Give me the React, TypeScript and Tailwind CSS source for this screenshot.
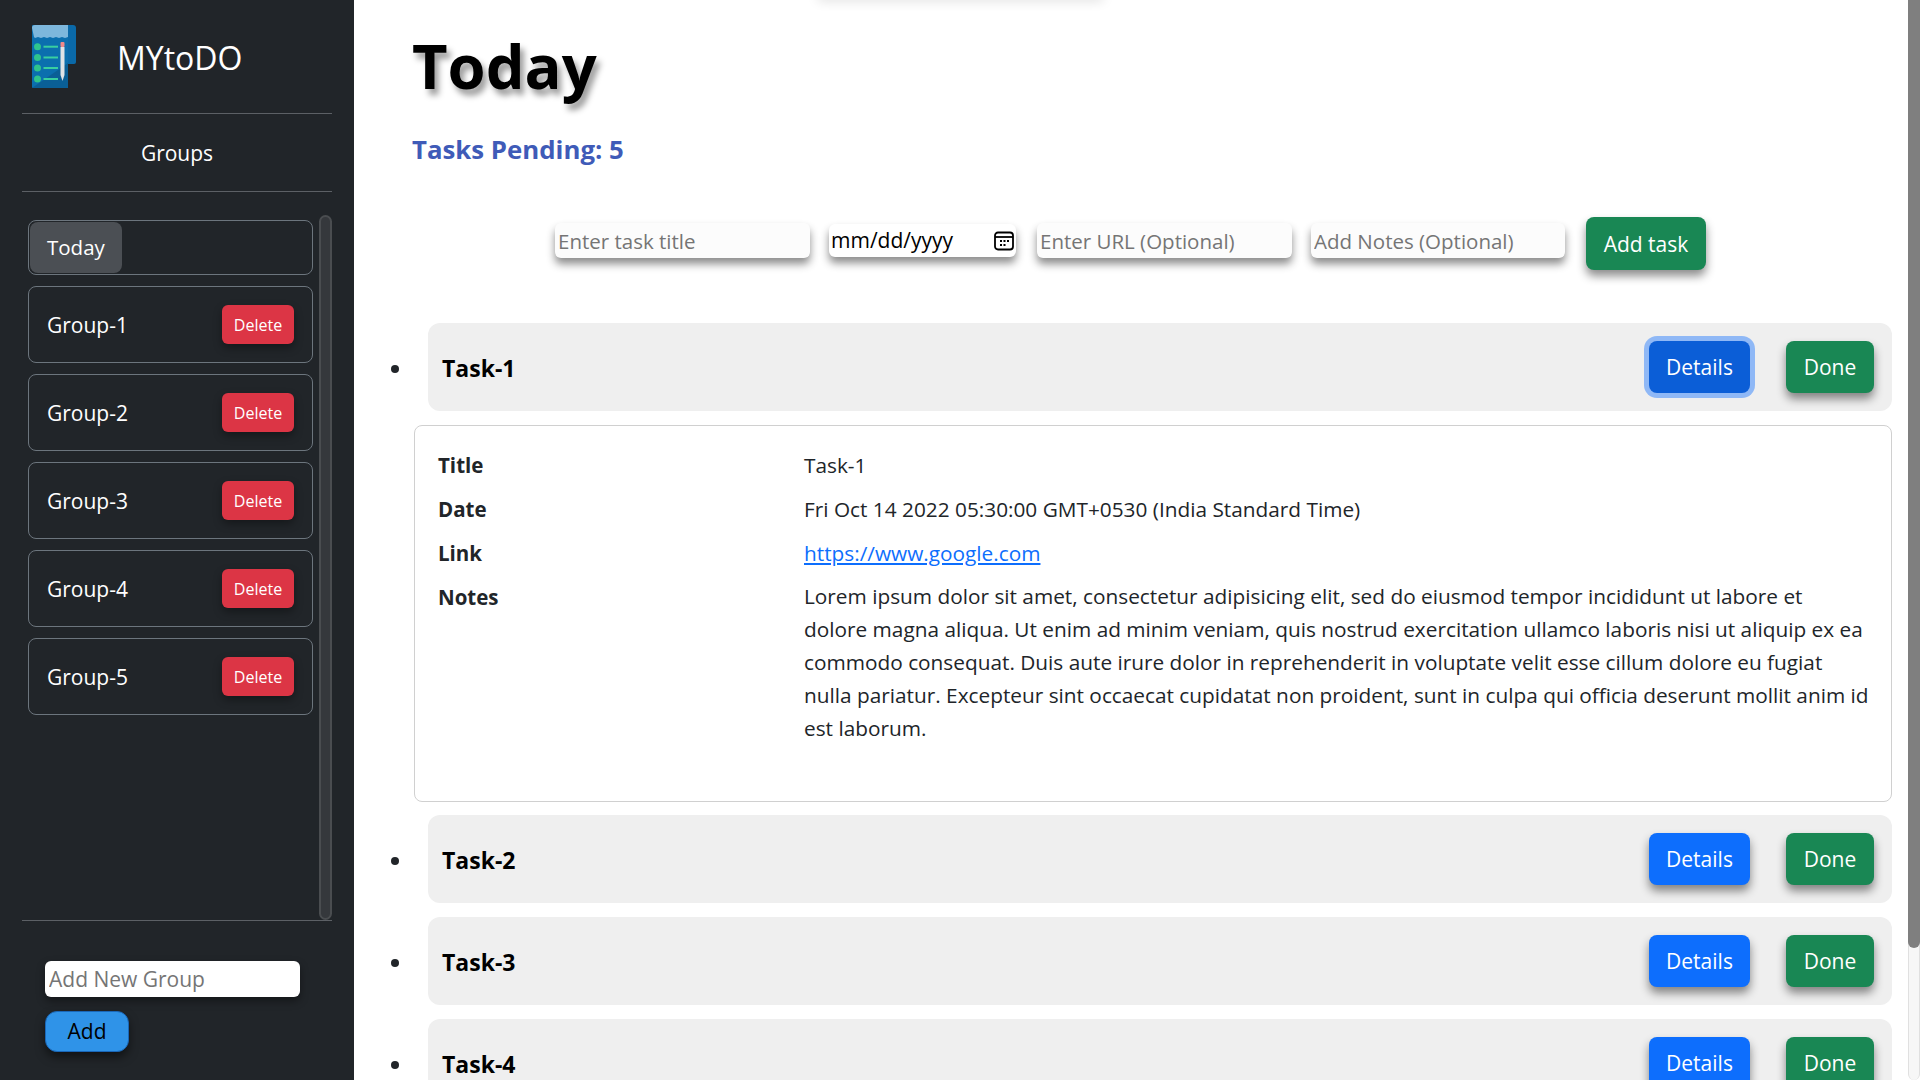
import type { ReactNode } from "react";

const font = "font-['Open_Sans','Noto_Sans',sans-serif]";

const groups = ["Group-1", "Group-2", "Group-3", "Group-4", "Group-5"];

function Logo() {
  return (
    <svg width="45" height="63" viewBox="0 0 45 63" className="shrink-0">
      <path d="M35 0h7a3 3 0 0 1 3 3v34a2 2 0 0 1-2 2h-8z" fill="#0a69a8" />
      <path d="M2 0h34a1 1 0 0 1 1 1v61a1 1 0 0 1-1 1H2a1 1 0 0 1-1-1V1a1 1 0 0 1 1-1z" fill="#0b6fae" />
      <path d="M1 3a3 3 0 0 1 3-3h33v12l-3 1-3-1-3 1-3-1-3 1-3-1-3 1-3-1-3 1-3-1-3 1-1-1z" fill="#7db7dc" />
      <path d="M1 63 37 38v25z" fill="#0a5f96" />
      {[21.7, 32.5, 43, 54].map((y) => (
        <g key={y}>
          <circle cx="6.5" cy={y} r="3.5" fill="#2fc48c" />
          <rect x="12.5" y={y - 1} width="14.5" height="2" fill="#39cfa0" />
        </g>
      ))}
      <rect x="29.5" y="17" width="4" height="5" rx="1" fill="#ef8a8a" />
      <path d="M29.5 22h4v28L31.5 56l-2-6z" fill="#dfe3e6" />
    </svg>
  );
}

function GroupRow({ name }: { name: string }) {
  return (
    <div className="flex h-[77px] w-[285px] items-center justify-between rounded-lg border border-[#6c757d] pl-[18px] pr-[18px]">
      <span className="pt-[2px] text-[21px] text-white">{name}</span>
      <button className="h-[39px] w-[72px] rounded-md bg-[#dc3545] text-[16px] text-white shadow-[0_4px_8px_rgba(0,0,0,0.35)]">
        Delete
      </button>
    </div>
  );
}

function Sidebar() {
  return (
    <aside className="flex h-[1080px] w-[354px] shrink-0 flex-col bg-[#212529] px-[22px]">
      <div className="flex h-[114px] items-start border-b border-[#5c6065] pl-[9px] pt-[25px]">
        <Logo />
        <span className="ml-[41px] mt-[11px] text-[32px] leading-[44px] text-white">MYtoDO</span>
      </div>
      <div className="flex h-[78px] items-center justify-center border-b border-[#5c6065] pt-[2px] text-[21px] text-white">
        Groups
      </div>
      <div className="flex h-[729px] border-b border-[#5c6065] pt-[23px]">
        <div className="flex w-[297px] flex-col gap-[11px] pl-[6px] pt-[5px]">
          <div className="h-[55px] w-[285px] rounded-lg border border-[#6c757d] p-px">
            <div className="flex h-full w-[92px] items-center rounded-lg bg-[#4b4f54] pl-[17px] text-[20.5px] text-white">
              Today
            </div>
          </div>
          {groups.map((g) => (
            <GroupRow key={g} name={g} />
          ))}
        </div>
        <div className="h-[705px] w-[13px] rounded-full border-2 border-[#4a4d50] bg-[#35383c]" />
      </div>
      <div className="flex flex-col items-start pl-[23px] pt-[40px]">
        <input
          placeholder="Add New Group"
          className="h-[36px] w-[255px] rounded-md bg-white px-[4px] text-[21px] text-black shadow-[0_4px_8px_rgba(0,0,0,0.4)] outline-none placeholder:text-[#757575]"
        />
        <button className="mt-[14px] h-[41px] w-[84px] rounded-xl border border-[#1a67b8] bg-[#2f93e8] text-[21px] text-black shadow-[0_5px_10px_rgba(0,0,0,0.5)]">
          Add
        </button>
      </div>
    </aside>
  );
}

function FormInput({ placeholder, width }: { placeholder: string; width: string }) {
  return (
    <input
      placeholder={placeholder}
      className={`h-[35px] ${width} rounded-md bg-[#fcfcfc] pl-[3px] pr-[4px] text-[20.5px] text-black shadow-[0_6px_8px_rgba(0,0,0,0.45)] outline-none placeholder:text-[#757575]`}
    />
  );
}

function TaskRow({ name, active }: { name: string; active?: boolean }) {
  return (
    <div className="flex items-center">
      <span className="ml-px mt-[3px] h-[8px] w-[8px] shrink-0 rounded-full bg-[#212529]" />
      <div className="ml-[29px] flex h-[88px] flex-1 items-center justify-between rounded-xl bg-[#efefef] pl-[14px] pr-[18px]">
        <span className="pt-[2px] text-[23px] font-bold text-black">{name}</span>
        <div className="flex items-center gap-[36px]">
          <button
            className={
              active
                ? "h-[52px] w-[101px] rounded-lg bg-[#0b5ed7] pt-[2px] text-[21px] text-white ring-[5px] ring-[#8fb8f6]"
                : "h-[52px] w-[101px] rounded-lg bg-[#0d6efd] pt-[2px] text-[21px] text-white shadow-[0_6px_10px_rgba(0,0,0,0.45)]"
            }
          >
            Details
          </button>
          <button className="h-[52px] w-[88px] rounded-lg bg-[#198754] pt-[2px] text-[21px] text-white shadow-[0_6px_10px_rgba(0,0,0,0.45)]">
            Done
          </button>
        </div>
      </div>
    </div>
  );
}

function DetailRow({ label, children }: { label: string; children: ReactNode }) {
  return (
    <div className="flex">
      <div className="w-[366px] shrink-0 text-[20.5px] font-bold leading-[44px] text-[#212529]">{label}</div>
      <div className="text-[20.8px] leading-[44px] text-[#212529]">{children}</div>
    </div>
  );
}

export default function App() {
  return (
    <div className={`flex h-[1080px] w-[1920px] overflow-hidden bg-white ${font}`}>
      <Sidebar />
      <main className="relative flex-1 overflow-hidden pl-[36px] pr-[28px]">
        <div className="absolute left-[464px] top-[-6px] h-[6px] w-[285px] shadow-[0_0_12px_rgba(0,0,0,0.18)]" />
        <h1 className="ml-[22px] mt-[28px] text-[61.5px] font-bold leading-[74px] text-black [text-shadow:4px_6px_6px_rgba(0,0,0,0.4)]">
          Today
        </h1>
        <div className="ml-[22px] mt-[28px] text-[25.8px] font-bold leading-[38px] text-[#3f5bb8]">
          Tasks Pending: 5
        </div>
        <div className="mt-[55px] flex items-start pl-[165px]">
          <FormInput placeholder="Enter task title" width="w-[255px]" />
          <div className="ml-[19px] mt-px flex h-[33px] w-[187px] items-center justify-between rounded-md bg-white pl-[2px] pr-[2px] text-[21px] text-black shadow-[0_6px_8px_rgba(0,0,0,0.45)]">
            <span>mm/dd/yyyy</span>
            <svg width="20" height="20" viewBox="0 0 20 20" fill="none">
              <rect x="1" y="1.5" width="18" height="17" rx="3" stroke="black" strokeWidth="1.8" />
              <path d="M1 6h18" stroke="black" strokeWidth="1.8" />
              <path d="M6 9h2v2H6zM9.5 9h2v2h-2zM13 9h2v2h-2zM6 13h2v2H6zM9.5 13h2v2h-2z" fill="black" />
            </svg>
          </div>
          <FormInput placeholder="Enter URL (Optional)" width="ml-[21px] w-[255px]" />
          <FormInput placeholder="Add Notes (Optional)" width="ml-[19px] w-[254px]" />
          <button className="ml-[21px] mt-[-6px] h-[53px] w-[120px] rounded-lg bg-[#198754] pt-[2px] text-[21px] text-white shadow-[0_6px_10px_rgba(0,0,0,0.45)]">
            Add task
          </button>
        </div>
        <div className="mt-[53px] flex flex-col">
          <TaskRow name="Task-1" active />
          <div className="ml-[24px] mt-[14px] h-[377px] rounded-lg border border-[#d0d0d0] pl-[23px] pr-[20px] pt-[17px]">
            <DetailRow label="Title">Task-1</DetailRow>
            <DetailRow label="Date">Fri Oct 14 2022 05:30:00 GMT+0530 (India Standard Time)</DetailRow>
            <DetailRow label="Link">
              <a className="text-[#0d6efd] underline" href="#">https://www.google.com</a>
            </DetailRow>
            <div className="flex">
              <div className="w-[366px] shrink-0 text-[20.5px] font-bold leading-[44px] text-[#212529]">Notes</div>
              <p className="pt-[5px] text-[20.8px] leading-[33px] text-[#212529]">
                Lorem ipsum dolor sit amet, consectetur adipisicing elit, sed do eiusmod tempor incididunt ut labore et dolore magna aliqua. Ut enim ad minim veniam, quis nostrud exercitation ullamco laboris nisi ut aliquip ex ea commodo consequat. Duis aute irure dolor in reprehenderit in voluptate velit esse cillum dolore eu fugiat nulla pariatur. Excepteur sint occaecat cupidatat non proident, sunt in culpa qui officia deserunt mollit anim id est laborum.
              </p>
            </div>
          </div>
          <div className="mt-[13px] flex flex-col gap-[14px]">
            <TaskRow name="Task-2" />
            <TaskRow name="Task-3" />
            <TaskRow name="Task-4" />
          </div>
        </div>
        <div className="absolute right-0 top-0 flex h-[1080px] w-[12px] flex-col rounded-b-full border-x border-[#e0e0e0] bg-[#f7f7f7]">
          <div className="ml-[-1px] h-[948px] w-[12px] rounded-b-full bg-[#7f7f7f]" />
        </div>
      </main>
    </div>
  );
}
